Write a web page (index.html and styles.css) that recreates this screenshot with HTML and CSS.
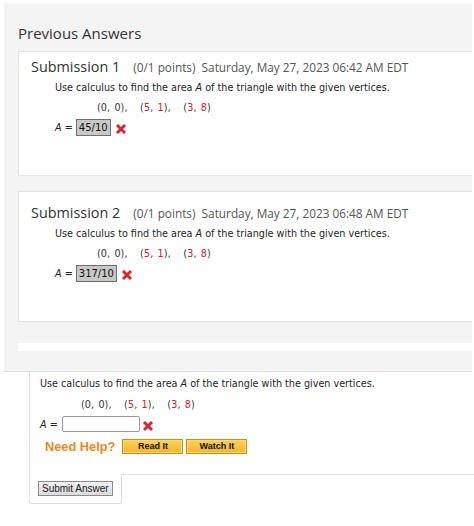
FILE: index.html
```html
<!DOCTYPE html>
<html>
<head>
<meta charset="utf-8">
<link rel="stylesheet" href="styles.css">
</head>
<body>
<div class="prev-panel">
  <h2 class="prev-title">Previous Answers</h2>
  <div class="card card-1">
    <div class="sub-head"><span class="sub-name">Submission 1</span><span class="sub-meta">(0/1 points)&nbsp; Saturday, May 27, 2023 06:42 AM EDT</span></div>
    <div class="q-text">Use calculus to find the area <i>A</i> of the triangle with the given vertices.</div>
    <div class="verts">(0, 0), &nbsp; (<span class="r">5</span>, <span class="r">1</span>), &nbsp; (<span class="r">3</span>, <span class="r">8</span>)</div>
    <div class="ans-row"><i>A</i>&nbsp;=&nbsp;<span class="ans-box">45/10</span><svg class="xmark" viewBox="0 0 12 12"><path d="M2 2 L10 10 M10 2 L2 10" /></svg></div>
  </div>
  <div class="card card-2">
    <div class="sub-head"><span class="sub-name">Submission 2</span><span class="sub-meta">(0/1 points)&nbsp; Saturday, May 27, 2023 06:48 AM EDT</span></div>
    <div class="q-text">Use calculus to find the area <i>A</i> of the triangle with the given vertices.</div>
    <div class="verts">(0, 0), &nbsp; (<span class="r">5</span>, <span class="r">1</span>), &nbsp; (<span class="r">3</span>, <span class="r">8</span>)</div>
    <div class="ans-row"><i>A</i>&nbsp;=&nbsp;<span class="ans-box">317/10</span><svg class="xmark" viewBox="0 0 12 12"><path d="M2 2 L10 10 M10 2 L2 10" /></svg></div>
  </div>
  <div class="card card-3"></div>
</div>
<div class="question">
  <div class="q-body">
    <div class="q-text">Use calculus to find the area <i>A</i> of the triangle with the given vertices.</div>
    <div class="verts verts-q">(0, 0), &nbsp; (<span class="r">5</span>, <span class="r">1</span>), &nbsp; (<span class="r">3</span>, <span class="r">8</span>)</div>
    <div class="ans-row ans-row-q"><i>A</i>&nbsp;=&nbsp;<span class="ans-input"></span><svg class="xmark" viewBox="0 0 12 12"><path d="M2 2 L10 10 M10 2 L2 10" /></svg></div>
    <div class="help-row"><span class="need-help">Need Help?</span><span class="help-btn btn-read">Read It</span><span class="help-btn btn-watch">Watch It</span></div>
  </div>
  <div class="submit-row">
    <div class="submit-tab"><span class="submit-btn">Submit Answer</span></div>
    <div class="submit-fill"></div>
  </div>
</div>
</body>
</html>
```
FILE: styles.css
```css
html, body {
  margin: 0;
  padding: 0;
  background: #ffffff;
}
body {
  width: 474px;
  height: 526px;
  overflow: hidden;
  font-family: "DejaVu Sans", Verdana, sans-serif;
}
.prev-panel {
  margin: 3px 2px 0 4px;
  height: 369px;
  background: #f4f4f4;
  border-bottom: 1px solid #dcdcdc;
  padding: 0 0 0 14px;
  box-sizing: border-box;
  overflow: hidden;
}
.prev-title {
  margin: 0;
  padding-top: 19px;
  height: 29px;
  font-family: "Open Sans", sans-serif;
  font-weight: 400;
  font-size: 15px;
  line-height: 22px;
  color: #333333;
}
.card {
  background: #ffffff;
  border: 1px solid #e4e4e4;
  border-right: none;
  margin-right: -10px;
  box-sizing: border-box;
  padding-left: 12px;
}
.card-1 {
  height: 125px;
  padding-top: 4px;
}
.card-2 {
  margin-top: 15px;
  height: 131px;
  padding-top: 10px;
}
.card-3 {
  margin-top: 21px;
  height: 8px;
  border: none;
}
.sub-head {
  display: flex;
  align-items: baseline;
  height: 21px;
  line-height: 21px;
  font-family: "Open Sans", sans-serif;
  color: #333333;
  white-space: nowrap;
}
.sub-name {
  font-size: 14.4px;
  margin-right: 13px;
}
.sub-meta {
  font-size: 11.8px;
  color: #555555;
}
.q-text {
  font-size: 9.65px;
  line-height: 14px;
  color: #1e1e1e;
  padding-left: 24px;
  margin-top: 4px;
  white-space: nowrap;
}
.verts {
  font-size: 9.65px;
  line-height: 14px;
  color: #333333;
  padding-left: 66px;
  margin-top: 6px;
  white-space: nowrap;
  word-spacing: 1px;
  letter-spacing: 0.1px;
}
.r {
  color: #d4202c;
}
.ans-row {
  display: flex;
  align-items: center;
  padding-left: 24px;
  margin-top: 4px;
  height: 16px;
  font-size: 9.65px;
  color: #222222;
}
.ans-box {
  display: inline-block;
  background: #c8c8c8;
  border: 1px solid #6e6e6e;
  padding: 0 2px;
  height: 15px;
  line-height: 15px;
  font-size: 10px;
  color: #111111;
}
.xmark {
  width: 12px;
  height: 12px;
  margin-left: 4px;
  margin-top: 3px;
}
.xmark path {
  stroke: #d8262e;
  stroke-width: 3;
  stroke-linecap: butt;
  fill: none;
}
.question {
  margin-left: 29px;
}
.q-body {
  border-left: 1px solid #e0e0e0;
  padding: 5px 0 0 0;
  height: 97px;
}
.question .q-text {
  padding-left: 10px;
  margin-top: 0;
}
.verts-q {
  padding-left: 51px;
  margin-top: 7px;
}
.ans-row-q {
  padding-left: 10px;
  margin-top: 4px;
}
.ans-input {
  display: inline-block;
  width: 76px;
  height: 14px;
  border: 1px solid #9a9a9a;
  border-radius: 2px;
  background: #ffffff;
  margin-left: 1px;
}
.ans-row-q .xmark {
  margin-left: 2px;
}
.help-row {
  display: flex;
  align-items: center;
  margin-top: 6px;
  padding-left: 15px;
  height: 16px;
}
.need-help {
  font-family: "Liberation Sans", Arial, sans-serif;
  font-weight: bold;
  font-size: 12.8px;
  color: #e68a1e;
  margin-right: 7px;
}
.help-btn {
  display: inline-block;
  box-sizing: border-box;
  width: 61px;
  height: 15px;
  line-height: 13px;
  text-align: center;
  font-family: "Liberation Sans", Arial, sans-serif;
  font-weight: bold;
  font-size: 9px;
  color: #111111;
  background: linear-gradient(#fcd25a, #f5b52a);
  border: 1px solid #d08a18;
  box-shadow: inset 0 0 0 1px #fbd97a;
  margin-right: 3px;
}
.submit-row {
  display: flex;
}
.submit-tab {
  display: flex;
  align-items: flex-start;
  width: 93px;
  height: 30px;
  box-sizing: border-box;
  border-left: 1px solid #e0e0e0;
  border-right: 1px solid #e0e0e0;
  border-bottom: 1px solid #e0e0e0;
  border-radius: 0 0 3px 3px;
  padding: 7px 0 0 8px;
}
.submit-fill {
  flex: 1;
  border-top: 1px solid #e0e0e0;
}
.submit-btn {
  display: inline-block;
  box-sizing: border-box;
  height: 15px;
  line-height: 13px;
  padding: 0 3px;
  font-family: "Liberation Sans", Arial, sans-serif;
  font-size: 10px;
  color: #222222;
  background: linear-gradient(#f0f0f0, #dcdcdc);
  border: 1px solid #8a8a8a;
}
```
